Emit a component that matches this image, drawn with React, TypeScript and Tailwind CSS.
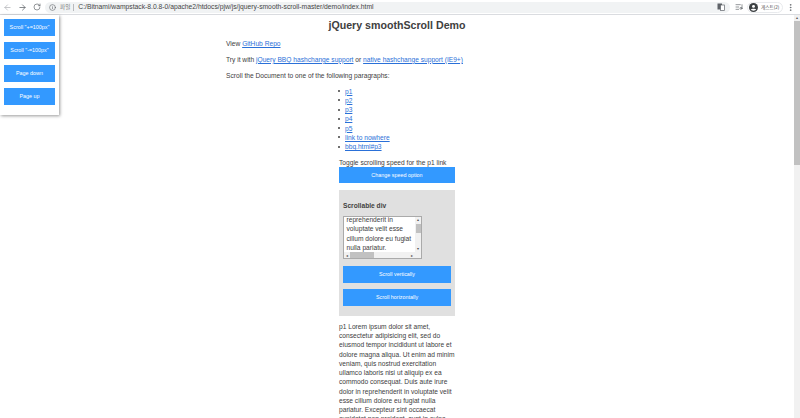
import { ArrowLeft, ArrowRight, RotateCw, Info, ListMusic, EllipsisVertical } from 'lucide-react'

const navLinks = ['p1', 'p2', 'p3', 'p4', 'p5', 'link to nowhere', 'bbq.html#p3']

function BlueButton({ label, className }: { label: string; className: string }) {
  return (
    <div className={`flex items-center justify-center bg-[#3399ff] text-white text-[5.4px] ${className}`}>
      {label}
    </div>
  )
}

function Link({ children }: { children: string }) {
  return <span className="text-[#2a70d8] underline">{children}</span>
}

export default function App() {
  return (
    <div className="relative flex flex-col w-[800px] h-[418px] overflow-hidden bg-white font-['Liberation_Sans',Arial,sans-serif] text-[#404040]">
      {/* Browser toolbar */}
      <div className="flex items-center h-[15px] shrink-0 border-b border-[#dadce0] bg-white">
        <div className="flex items-center gap-[6px] pl-[3px] w-[45px]">
          <ArrowLeft className="w-[9px] h-[9px] text-[#b4b6b9]" strokeWidth={2} />
          <ArrowRight className="w-[9px] h-[9px] text-[#5f6368]" strokeWidth={2} />
          <RotateCw className="w-[8px] h-[8px] text-[#5f6368]" strokeWidth={2} />
        </div>
        <div className="flex items-center w-[685px] h-[11px] rounded-full bg-[#f1f3f4] pl-[4px] text-[6.75px] text-[#444444]">
          <Info className="w-[7px] h-[7px] text-[#5f6368]" strokeWidth={2} />
          <span className="ml-[4px] text-[5.6px] text-[#777777] font-['Noto_Sans_CJK_KR',sans-serif]">파일</span>
          <span className="ml-[3px] mr-[4px] w-px h-[7px] bg-[#b8babd]" />
          <span>C:/Bitnami/wampstack-8.0.8-0/apache2/htdocs/pjw/js/jquery-smooth-scroll-master/demo/index.html</span>
          {/* translate icon */}
          <svg viewBox="0 0 8 8" className="ml-auto mr-[5px] w-[8px] h-[8px]">
            <rect x="0.5" y="0.5" width="4.5" height="6" fill="#5f6368" />
            <rect x="3.5" y="2" width="4" height="5.5" fill="#ffffff" stroke="#5f6368" strokeWidth="0.7" />
          </svg>
        </div>
        <ListMusic className="ml-[5px] w-[8px] h-[8px] text-[#5f6368]" strokeWidth={2} />
        <div className="ml-[4px] flex items-center gap-[3px] w-[36px] h-[11px] rounded-full border border-[#e8eaed] pl-[1px]">
          {/* profile avatar */}
          <svg viewBox="0 0 10 10" className="w-[9px] h-[9px]">
            <circle cx="5" cy="5" r="5" fill="#3c4043" />
            <circle cx="5" cy="3.8" r="1.6" fill="#ffffff" />
            <path d="M2 7.6 C3 6 7 6 8 7.6 C7 8.8 3 8.8 2 7.6 Z" fill="#ffffff" />
          </svg>
          <span className="text-[4.6px] text-[#444444] font-['Noto_Sans_CJK_KR',sans-serif]">게스트(2)</span>
        </div>
        <EllipsisVertical className="ml-[3px] w-[9px] h-[9px] text-[#5f6368]" strokeWidth={2} />
      </div>

      <div className="flex flex-1 min-h-0">
        {/* Page */}
        <div className="flex-1 min-w-0 overflow-hidden">
          <div className="w-[342px] mx-auto text-[6.65px] leading-[9.25px]">
            <h1 className="mt-[3px] text-center text-[10.64px] leading-[14px] font-bold">jQuery smoothScroll Demo</h1>
            <p className="mt-[7px]">View <Link>GitHub Repo</Link></p>
            <p className="mt-[6.6px]">Try it with <Link>jQuery BBQ hashchange support</Link> or <Link>native hashchange support (IE9+)</Link></p>
            <p className="mt-[6.6px]">Scroll the Document to one of the following paragraphs:</p>

            <div className="w-[116px] ml-[113px]">
              <ul className="mt-[6.6px]">
                {navLinks.map((item) => (
                  <li key={item} className="flex items-center gap-[5px] -ml-[1px]">
                    <span className="w-[2px] h-[2px] rounded-full bg-[#404040]" />
                    <Link>{item}</Link>
                  </li>
                ))}
              </ul>
              <p className="mt-[6.6px]">Toggle scrolling speed for the p1 link</p>
              <BlueButton label="Change speed option" className="h-[16px]" />

              {/* Scrollable panel */}
              <div className="mt-[7px] h-[126px] bg-[#e0e0e0] px-[4px] pt-[11px]">
                <div className="font-bold leading-[9px]">Scrollable div</div>
                <div className="flex mt-[6px] w-[79px] h-[43px] border border-[#aaaaaa] bg-white">
                  <div className="flex-1 flex flex-col min-w-0">
                    <div className="flex-1 overflow-hidden pl-[2.5px] leading-[9.2px]">
                      <div className="-mt-[2px] whitespace-nowrap">
                        <div>reprehenderit in</div>
                        <div>voluptate velit esse</div>
                        <div>cillum dolore eu fugiat</div>
                        <div>nulla pariatur.</div>
                      </div>
                    </div>
                    <div className="flex items-center h-[6px] bg-[#f1f1f1] text-[4px] text-[#505050]">
                      <span className="w-[6px] text-center">◂</span>
                      <div className="w-[24px] h-[6px] bg-[#c1c1c1]" />
                      <span className="ml-auto w-[6px] text-center">▸</span>
                    </div>
                  </div>
                  <div className="flex flex-col items-center w-[6px] bg-[#f1f1f1] text-[4px] text-[#505050]">
                    <span className="h-[6px] leading-[6px]">▴</span>
                    <div className="mt-[1px] w-[5px] h-[9px] bg-[#c1c1c1]" />
                    <span className="mt-auto h-[12px] leading-[6px]">▾</span>
                  </div>
                </div>
                <BlueButton label="Scroll vertically" className="w-[108px] h-[16.5px] mt-[7px]" />
                <BlueButton label="Scroll horizontally" className="w-[108px] h-[16.5px] mt-[6.5px]" />
              </div>

              <p className="mt-[5.8px]">
                p1 Lorem ipsum dolor sit amet, consectetur adipisicing elit, sed do eiusmod tempor incididunt ut labore et dolore magna aliqua. Ut enim ad minim veniam, quis nostrud exercitation ullamco laboris nisi ut aliquip ex ea commodo consequat. Duis aute irure dolor in reprehenderit in voluptate velit esse cillum dolore eu fugiat nulla pariatur. Excepteur sint occaecat cupidatat non proident, sunt in culpa
              </p>
            </div>
          </div>
        </div>

        {/* Window scrollbar */}
        <div className="flex flex-col w-[6px] shrink-0 bg-[#f1f1f1]">
          <div className="h-[6px] text-[4px] leading-[6px] text-center text-[#505050]">▴</div>
          <div className="h-[144px] bg-[#c1c1c1]" />
        </div>
      </div>

      {/* Fixed button panel over the page */}
      <div className="absolute left-0 top-[15px] flex flex-col gap-[6.5px] w-[59px] h-[100px] bg-white pl-[4px] pr-[4px] pt-[4px] shadow-[1px_1px_3px_rgba(0,0,0,0.4)]">
        <BlueButton label='Scroll "+=100px"' className="h-[16.5px]" />
        <BlueButton label='Scroll "-=100px"' className="h-[16.5px]" />
        <BlueButton label="Page down" className="h-[16.5px]" />
        <BlueButton label="Page up" className="h-[16.5px]" />
      </div>
    </div>
  )
}
